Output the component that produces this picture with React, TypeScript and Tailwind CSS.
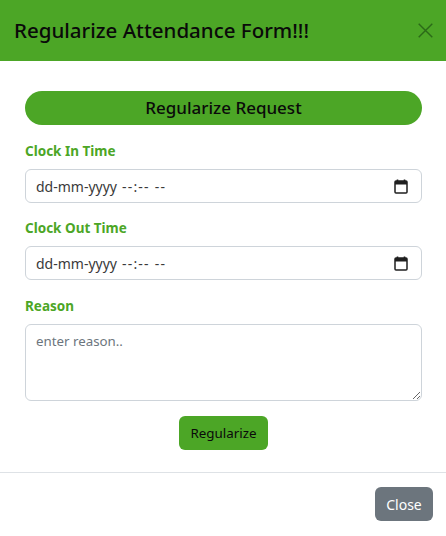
const font = "font-['Noto_Sans',sans-serif]";

function CalendarIcon() {
  return (
    <svg className="w-[14px] h-[15px]" viewBox="0 0 14 15" fill="none">
      <path d="M3.5 0.5v2M10.5 0.5v2" stroke="#1f1f1f" strokeWidth="1.6" />
      <rect x="1" y="2" width="12" height="12" rx="1" stroke="#1f1f1f" strokeWidth="1.5" />
      <rect x="1" y="2" width="12" height="3.5" fill="#1f1f1f" />
    </svg>
  );
}

function DateField({ label }: { label: string }) {
  return (
    <div>
      <label className="block text-[13.5px] leading-[18px] font-bold text-[#4ca626] mb-[9px]">{label}</label>
      <div className="h-[34px] flex items-center justify-between pl-[10px] pr-[13px] bg-white border border-[#ced4da] rounded-md text-[14px] text-[#3a3a3a]">
        <span className="flex">
          <span>dd-mm-yyyy</span>
          <span className="ml-[5px] tracking-[1.2px]">--:--</span>
          <span className="ml-[5px] tracking-[1.2px]">--</span>
        </span>
        <CalendarIcon />
      </div>
    </div>
  );
}

export default function App() {
  return (
    <div className={`${font} w-[446px] h-[536px] bg-white flex flex-col overflow-hidden`}>
      <div className="h-[61px] shrink-0 bg-[#4ca626] flex items-center justify-between pl-[14px] pr-[13px]">
        <h5 className="text-[20.5px] font-medium text-[#0a0a0a]">Regularize Attendance Form!!!</h5>
        <svg className="w-[15px] h-[15px]" viewBox="0 0 15 15" fill="none">
          <path d="M0.7 0.7l13.6 13.6M14.3 0.7L0.7 14.3" stroke="#2b6a18" strokeWidth="1.4" />
        </svg>
      </div>

      <div className="h-[411px] shrink-0 pt-[30px] pl-[25px] pr-[24px]">
        <div className="h-[34px] rounded-[17px] bg-[#4ca626] flex items-center justify-center text-[17px] font-medium text-[#0a0a0a]">
          Regularize Request
        </div>

        <div className="mt-[17px] flex flex-col gap-[16px]">
          <DateField label="Clock In Time" />
          <DateField label="Clock Out Time" />
        </div>

        <div className="mt-[17px]">
          <label className="block text-[13.5px] leading-[18px] font-bold text-[#4ca626] mb-[9px]">Reason</label>
          <textarea
            readOnly
            placeholder="enter reason.."
            className="block w-full h-[77px] py-[6px] px-[10px] border border-[#ced4da] rounded-md text-[13.3px] leading-[21px] placeholder:text-[#6c757d] outline-none"
          />
        </div>

        <div className="mt-[15px] flex justify-center">
          <button className="w-[89px] h-[34px] rounded-md bg-[#4ca626] text-[13.4px] text-[#0a0a0a]">Regularize</button>
        </div>
      </div>

      <div className="flex-1 border-t border-[#dee2e6] flex justify-end pt-[14px] pr-[13px]">
        <button className="w-[58px] h-[34px] rounded-md bg-[#6c757d] text-[14px] text-white">Close</button>
      </div>
    </div>
  );
}
